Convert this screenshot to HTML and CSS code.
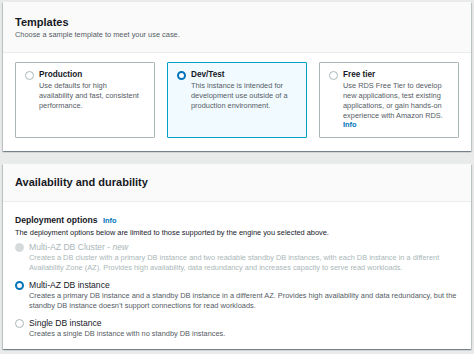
FILE: index.html
```html
<!DOCTYPE html>
<html lang="en">
<head>
<meta charset="utf-8">
<title>Templates</title>
<link rel="stylesheet" href="styles.css">
</head>
<body>
<div class="page">
  <section class="panel">
    <header class="panel-head">
      <h2 class="panel-title">Templates</h2>
      <p class="panel-sub">Choose a sample template to meet your use case.</p>
    </header>
    <div class="panel-body tiles">
      <div class="tile">
        <span class="radio"></span>
        <div class="tile-text">
          <div class="tile-title">Production</div>
          <div class="tile-desc">Use defaults for high availability and fast, consistent performance.</div>
        </div>
      </div>
      <div class="tile tile-selected">
        <span class="radio radio-on"></span>
        <div class="tile-text">
          <div class="tile-title">Dev/Test</div>
          <div class="tile-desc">This instance is intended for development use outside of a production environment.</div>
        </div>
      </div>
      <div class="tile">
        <span class="radio"></span>
        <div class="tile-text">
          <div class="tile-title">Free tier</div>
          <div class="tile-desc">Use RDS Free Tier to develop new applications, test existing applications, or gain hands-on experience with Amazon RDS.</div>
          <a class="info tile-info">Info</a>
        </div>
      </div>
    </div>
  </section>

  <section class="panel">
    <header class="panel-head panel-head-plain">
      <h2 class="panel-title">Availability and durability</h2>
    </header>
    <div class="panel-body options">
      <div class="field-label">Deployment options <a class="info">Info</a></div>
      <div class="field-desc">The deployment options below are limited to those supported by the engine you selected above.</div>
      <div class="opt opt-disabled">
        <span class="radio radio-disabled"></span>
        <div class="opt-text">
          <div class="opt-label">Multi-AZ DB Cluster - <em>new</em></div>
          <div class="opt-desc">Creates a DB cluster with a primary DB instance and two readable standby DB instances, with each DB instance in a different Availability Zone (AZ). Provides high availability, data redundancy and increases capacity to serve read workloads.</div>
        </div>
      </div>
      <div class="opt">
        <span class="radio radio-on"></span>
        <div class="opt-text">
          <div class="opt-label">Multi-AZ DB instance</div>
          <div class="opt-desc">Creates a primary DB instance and a standby DB instance in a different AZ. Provides high availability and data redundancy, but the standby DB instance doesn’t support connections for read workloads.</div>
        </div>
      </div>
      <div class="opt">
        <span class="radio"></span>
        <div class="opt-text">
          <div class="opt-label">Single DB instance</div>
          <div class="opt-desc">Creates a single DB instance with no standby DB instances.</div>
        </div>
      </div>
    </div>
  </section>
</div>
</body>
</html>
```

FILE: styles.css
```css
* { box-sizing: border-box; }

html, body {
  margin: 0;
  padding: 0;
}

body {
  background: #e9ebeb;
  font-family: "Liberation Sans", Arial, sans-serif;
  color: #16191f;
  width: 474px;
  height: 354px;
  overflow: hidden;
}

.page {
  display: flex;
  flex-direction: column;
  gap: 13px;
  padding: 2px 3px 0 3px;
}

.panel {
  background: #ffffff;
  box-shadow: 0 1px 1px 0 rgba(0, 28, 36, 0.3), 1px 1px 1px 0 rgba(0, 28, 36, 0.15), -1px 1px 1px 0 rgba(0, 28, 36, 0.15);
}

.panel-head {
  background: #fafafa;
  border-bottom: 1px solid #eaeded;
  padding: 13px 12px 12px 12px;
}

.panel-head-plain {
  padding: 11px 12px 12px 12px;
}

.panel-title {
  margin: 0;
  font-size: 11px;
  line-height: 14px;
  font-weight: 700;
  color: #16191f;
}

.panel-sub {
  margin: 1px 0 0 0;
  font-size: 7.4px;
  line-height: 10px;
  color: #545b64;
}

.panel-body {
  padding: 9px 12px 13px 12px;
}

.tiles {
  display: grid;
  grid-template-columns: repeat(3, 1fr);
  gap: 12px;
  align-items: stretch;
}

.tile {
  display: flex;
  align-items: flex-start;
  gap: 5px;
  border: 1px solid #aab7b8;
  border-radius: 1px;
  padding: 6px 12px 6px 9px;
  background: #ffffff;
  min-height: 76px;
}

.tile-selected {
  background: #f1faff;
  border-color: #00a1c9;
}

.tile-text {
  display: flex;
  flex-direction: column;
}

.tile-title {
  font-size: 8.2px;
  line-height: 12.3px;
  font-weight: 700;
  color: #16191f;
}

.tile-desc {
  font-size: 7.4px;
  line-height: 9.8px;
  color: #545b64;
}

.info {
  color: #0073bb;
  font-weight: 700;
  font-size: 7.4px;
  text-decoration: none;
}

.tile-info {
  line-height: 9.8px;
}

.radio {
  flex: none;
  width: 9px;
  height: 9px;
  border-radius: 50%;
  border: 1px solid #aab7b8;
  background: #ffffff;
  margin-top: 1.7px;
}

.radio-on {
  border: 2.6px solid #0073bb;
  background: #ffffff;
}

.radio-disabled {
  border-color: #d5dbdb;
  background: #d5dbdb;
}

.options {
  padding: 12px 12px 10px 12px;
}

.field-label {
  font-size: 8.6px;
  line-height: 12.3px;
  font-weight: 700;
  color: #16191f;
}

.field-label .info {
  margin-left: 3px;
}

.field-desc {
  margin-top: 1px;
  font-size: 7.4px;
  line-height: 9.8px;
  color: #16191f;
}

.opt {
  display: flex;
  align-items: flex-start;
  gap: 5px;
  margin-top: 6px;
}

.field-desc + .opt {
  margin-top: 3px;
}

.opt-text {
  display: flex;
  flex-direction: column;
}

.opt-label {
  font-size: 8.6px;
  line-height: 12.3px;
  color: #16191f;
}

.opt-desc {
  font-size: 7.4px;
  line-height: 9.8px;
  color: #545b64;
}

.opt-disabled .opt-label,
.opt-disabled .opt-desc {
  color: #aab7b8;
}
```
